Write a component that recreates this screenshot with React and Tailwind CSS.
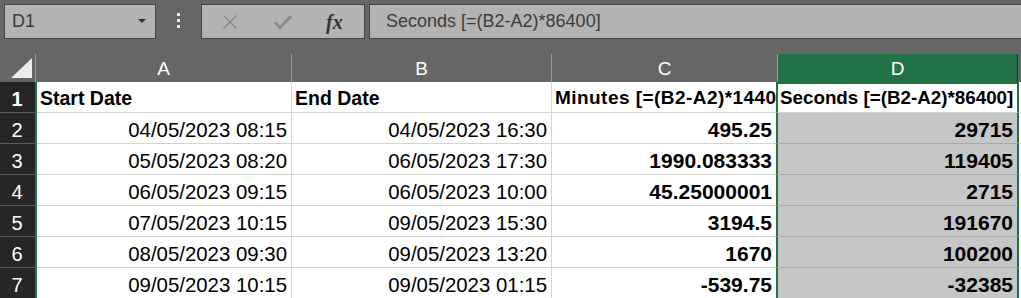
import React from "react";

const rows = [
  ["04/05/2023 08:15", "04/05/2023 16:30", "495.25", "29715"],
  ["05/05/2023 08:20", "06/05/2023 17:30", "1990.083333", "119405"],
  ["06/05/2023 09:15", "06/05/2023 10:00", "45.25000001", "2715"],
  ["07/05/2023 10:15", "09/05/2023 15:30", "3194.5", "191670"],
  ["08/05/2023 09:30", "09/05/2023 13:20", "1670", "100200"],
  ["09/05/2023 10:15", "09/05/2023 01:15", "-539.75", "-32385"],
];

const font = { fontFamily: '"Liberation Sans", Arial, sans-serif' };

const FormulaBar = () => (
  <div className="h-[54px] bg-[#666666] flex items-start pt-[4px] pl-[4px]">
    {/* name box */}
    <div className="w-[152px] h-[35px] bg-[#b3b3b3] border border-[#474747] flex items-center pl-[7px] pr-[9px]">
      <span className="text-[18px] text-[#3c3c3c] flex-1">D1</span>
      <svg width="8" height="5" viewBox="0 0 8 5">
        <path d="M0 0 H8 L4 4 Z" fill="#333" />
      </svg>
    </div>
    <div className="w-[45px] flex flex-col items-center gap-[3px] pt-[9px]">
      <div className="w-[3px] h-[3px] bg-[#f2f2f2]" />
      <div className="w-[3px] h-[3px] bg-[#f2f2f2]" />
      <div className="w-[3px] h-[3px] bg-[#f2f2f2]" />
    </div>
    {/* cancel / enter / fx */}
    <div className="w-[164px] h-[35px] bg-[#b3b3b3] border border-[#474747] flex items-center">
      <svg width="16" height="16" viewBox="0 0 16 16" className="ml-[20px]">
        <path d="M1.5 1.5 L14.5 14.5 M14.5 1.5 L1.5 14.5" stroke="#8a8a8a" strokeWidth="1.6" />
      </svg>
      <svg width="20" height="16" viewBox="0 0 20 16" className="ml-[35px]">
        <path d="M2 8.5 L7 13.5 L18 2" stroke="#8a8a8a" strokeWidth="3" fill="none" />
      </svg>
      <span
        className="ml-[33px] text-[20px] italic font-bold text-[#333] leading-none"
        style={{ fontFamily: '"Liberation Serif", serif' }}
      >
        fx
      </span>
    </div>
    <div className="ml-[4px] flex-1 h-[35px] bg-[#b3b3b3] border border-[#474747] border-r-0 flex items-center pl-[16px]">
      <span className="text-[18px] text-[#3c3c3c]">Seconds [=(B2-A2)*86400]</span>
    </div>
  </div>
);

const HeaderRow = () => (
  <div className="flex h-[28px] bg-[#666666] text-white text-[19px]">
    <div className="w-[36px] flex items-end justify-end pr-[3px] pb-[4px] border-r border-[#9c9c9c]">
      <svg width="21" height="20" viewBox="0 0 21 20">
        <path d="M21 0 V20 H0 Z" fill="#ececec" />
      </svg>
    </div>
    <div className="w-[256px] flex items-center justify-center border-r border-[#9c9c9c] pt-[2px]">A</div>
    <div className="w-[260px] flex items-center justify-center border-r border-[#9c9c9c] pt-[2px]">B</div>
    <div className="w-[225px] flex items-center justify-center pt-[2px]">C</div>
    <div className="w-[241px] flex items-center justify-center bg-[#217346] border-l border-[#9c9c9c] border-r border-r-[#2b2b2b] pt-[2px]">
      D
    </div>
    <div className="flex-1" />
  </div>
);

const RowHead = ({ n }) => (
  <div className="w-[37px] bg-[#262626] text-white text-[20px] flex items-center justify-center border-b border-[#5c5c5c] border-r-2 border-r-[#217346] pr-[1px] pt-[3px]">
    {n}
  </div>
);

export default function App() {
  return (
    <div className="w-[1021px] h-[298px] overflow-hidden bg-white" style={font}>
      <FormulaBar />
      <HeaderRow />
      <div className="flex h-[31px] text-[19.5px] font-bold text-black">
        <RowHead n={1} />
        <div className="w-[255px] border-r border-b border-[#d4d4d4] flex items-center pl-[3px] pt-[3px] whitespace-nowrap">
          Start Date
        </div>
        <div className="w-[260px] border-r border-b border-[#d4d4d4] flex items-center pl-[3px] pt-[3px] whitespace-nowrap">
          End Date
        </div>
        <div className="w-[224px] border-b border-[#d4d4d4] flex items-center pl-[3px] pt-[3px] whitespace-nowrap text-[19px] tracking-[0.45px]">
          Minutes [=(B2-A2)*1440
        </div>
        <div className="w-[243px] border-x-2 border-t-2 border-[#217346] border-b border-b-[#d4d4d4] flex items-center pl-[2px] pt-[1px] whitespace-nowrap bg-white text-[18.8px]">
          Seconds [=(B2-A2)*86400]
        </div>
        <div className="flex-1 border-b border-[#d4d4d4]" />
      </div>
      {rows.map((r, i) => (
        <div key={i} className="flex h-[31px] text-black">
          <RowHead n={i + 2} />
          <div className="w-[255px] border-r border-b border-[#d4d4d4] flex items-center justify-end pr-[4px] pt-[4px] text-[20.4px]">
            {r[0]}
          </div>
          <div className="w-[260px] border-r border-b border-[#d4d4d4] flex items-center justify-end pr-[4px] pt-[4px] text-[20.4px]">
            {r[1]}
          </div>
          <div className="w-[224px] border-b border-[#d4d4d4] flex items-center justify-end pr-[4px] pt-[4px] text-[21px] font-bold">
            {r[2]}
          </div>
          <div className="w-[243px] border-x-2 border-x-[#217346] border-b border-b-[#a9a9a9] bg-[#c6c6c6] flex items-center justify-end pr-[4px] pt-[4px] text-[21px] font-bold">
            {r[3]}
          </div>
          <div className="flex-1 border-b border-[#d4d4d4]" />
        </div>
      ))}
    </div>
  );
}
